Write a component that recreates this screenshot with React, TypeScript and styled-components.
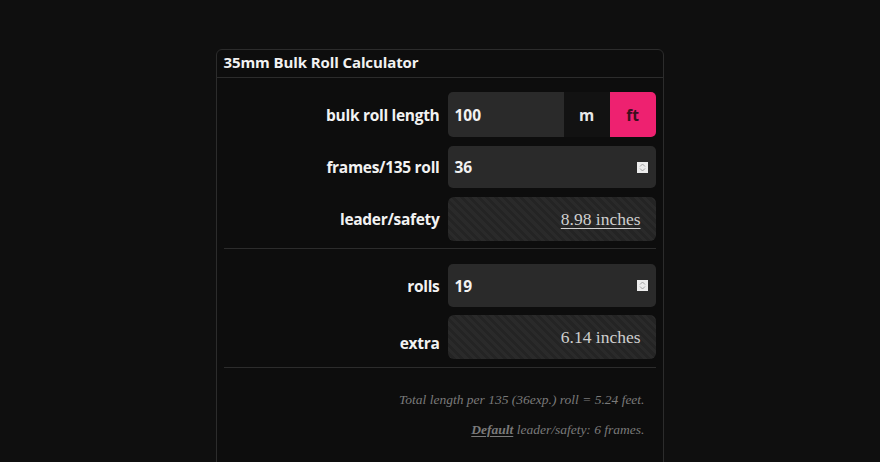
import styled, { createGlobalStyle } from "styled-components";

const Global = createGlobalStyle`
    body {
        margin: 0;
        background: #0f0f0f;
        font-family: "Open Sans", "DejaVu Sans", sans-serif;
        color: #f2f2f2;
    }
`;

const Page = styled.div`
    display: flex;
    justify-content: center;
    padding-top: 49px;
    height: 413px;
    overflow: hidden;
`;

const Card = styled.section`
    width: 446px;
    margin-right: 1px;
    border: 1px solid #2c2c2c;
    border-radius: 6px;
    background: #0d0d0d;
    height: 480px;
`;

const Header = styled.h1`
    margin: 0;
    padding: 2px 7px 0;
    height: 25px;
    font-size: 15px;
    font-weight: 700;
    border-bottom: 1px solid #2c2c2c;
    letter-spacing: -0.1px;
`;

const Body = styled.div`
    padding: 14px 7px 0;
    display: flex;
    flex-direction: column;
`;

const Row = styled.div<{ $gap?: number; $bottom?: boolean }>`
    display: grid;
    grid-template-columns: 216px 208px;
    column-gap: 8px;
    align-items: ${(p) => (p.$bottom ? "end" : "center")};
    margin-bottom: ${(p) => p.$gap ?? 9}px;
`;

const Label = styled.label<{ $pad?: number }>`
    text-align: right;
    font-size: 15.5px;
    font-weight: 700;
    letter-spacing: -0.3px;
    padding-bottom: ${(p) => p.$pad ?? 0}px;
`;

const Group = styled.div`
    display: flex;
    height: 45px;
    border-radius: 5px;
    overflow: hidden;
`;

const Field = styled.div<{ $h: number }>`
    flex: 1;
    display: flex;
    align-items: center;
    justify-content: space-between;
    height: ${(p) => p.$h}px;
    padding: 0 8px 0 7px;
    background: #2a2a2a;
    border-radius: 5px;
    font-size: 15.5px;
    font-weight: 700;
    box-sizing: border-box;
`;

const GroupField = styled(Field)`
    border-radius: 0;
`;

const Unit = styled.button<{ $active?: boolean }>`
    all: unset;
    width: 46px;
    text-align: center;
    font-size: 15.5px;
    font-weight: 700;
    background: ${(p) => (p.$active ? "#ee2170" : "#121212")};
    color: ${(p) => (p.$active ? "#3a0f1c" : "#e8e8e8")};
`;

const Spin = styled.span`
    width: 11px;
    height: 11px;
    background: #ececec;
    display: flex;
    align-items: center;
    justify-content: center;
`;

const Output = styled.div<{ $h: number; $link?: boolean }>`
    height: ${(p) => p.$h}px;
    border-radius: 6px;
    display: flex;
    align-items: center;
    justify-content: flex-end;
    padding-right: 15px;
    font-family: "Liberation Serif", "DejaVu Serif", serif;
    font-size: 17.5px;
    color: #cfcfcf;
    background: repeating-linear-gradient(
        45deg,
        #2a2a2a 0px,
        #2a2a2a 3px,
        #242424 3px,
        #242424 6px
    );
    text-decoration: ${(p) => (p.$link ? "underline" : "none")};
    text-underline-offset: 3px;
`;

const Divider = styled.hr<{ $after: number }>`
    border: none;
    border-top: 1px solid #2c2c2c;
    margin: 0 0 ${(p) => p.$after}px;
`;

const Notes = styled.div`
    display: flex;
    flex-direction: column;
    align-items: flex-end;
    gap: 14px;
    padding: 24px 11px 0 0;
    font-family: "Liberation Serif", "DejaVu Serif", serif;
    font-style: italic;
    font-size: 13.5px;
    color: #7a7a7a;
`;

const Strong = styled.b`
    text-decoration: underline;
    text-underline-offset: 2px;
`;

function Spinner() {
    return (
        <Spin>
            <svg width="7" height="9" viewBox="0 0 7 9">
                <path d="M1 3.5 L3.5 1 L6 3.5 M1 5.5 L3.5 8 L6 5.5" fill="none" stroke="#999" strokeWidth="0.9" />
            </svg>
        </Spin>
    );
}

export default function App() {
    return (
        <>
            <Global />
            <Page>
                <Card>
                    <Header>35mm Bulk Roll Calculator</Header>
                    <Body>
                        <Row>
                            <Label>bulk roll length</Label>
                            <Group>
                                <GroupField $h={45}>100</GroupField>
                                <Unit>m</Unit>
                                <Unit $active>ft</Unit>
                            </Group>
                        </Row>
                        <Row>
                            <Label>frames/135 roll</Label>
                            <Field $h={42}>
                                36
                                <Spinner />
                            </Field>
                        </Row>
                        <Row $gap={7}>
                            <Label>leader/safety</Label>
                            <Output $h={44} $link>8.98 inches</Output>
                        </Row>
                        <Divider $after={15} />
                        <Row $gap={8}>
                            <Label>rolls</Label>
                            <Field $h={43}>
                                19
                                <Spinner />
                            </Field>
                        </Row>
                        <Row $gap={8} $bottom>
                            <Label $pad={5}>extra</Label>
                            <Output $h={44}>6.14 inches</Output>
                        </Row>
                        <Divider $after={0} />
                        <Notes>
                            <span>Total length per 135 (36exp.) roll = 5.24 feet.</span>
                            <span>
                                <Strong>Default</Strong> leader/safety: 6 frames.
                            </span>
                        </Notes>
                    </Body>
                </Card>
            </Page>
        </>
    );
}
